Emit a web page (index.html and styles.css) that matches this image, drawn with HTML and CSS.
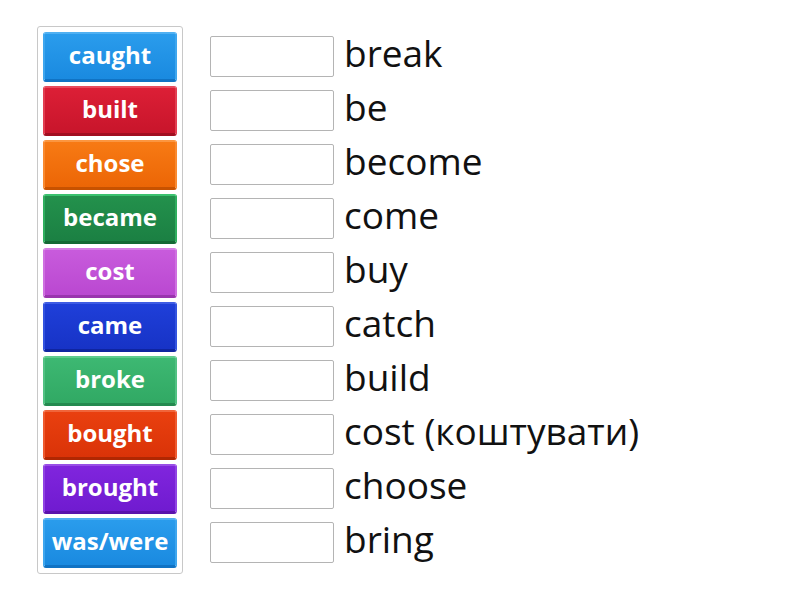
FILE: index.html
```html
<!DOCTYPE html>
<html>
<head>
<meta charset="utf-8">
<link rel="stylesheet" href="styles.css">
</head>
<body>
<div class="page">
  <div class="bank">
    <div class="tile t-blue">caught</div>
    <div class="tile t-red">built</div>
    <div class="tile t-orange">chose</div>
    <div class="tile t-green">became</div>
    <div class="tile t-magenta">cost</div>
    <div class="tile t-navy">came</div>
    <div class="tile t-mint">broke</div>
    <div class="tile t-vermil">bought</div>
    <div class="tile t-purple">brought</div>
    <div class="tile t-blue">was/were</div>
  </div>
  <div class="rows">
    <div class="row"><div class="slot"></div><span class="word">break</span></div>
    <div class="row"><div class="slot"></div><span class="word">be</span></div>
    <div class="row"><div class="slot"></div><span class="word">become</span></div>
    <div class="row"><div class="slot"></div><span class="word">come</span></div>
    <div class="row"><div class="slot"></div><span class="word">buy</span></div>
    <div class="row"><div class="slot"></div><span class="word">catch</span></div>
    <div class="row"><div class="slot"></div><span class="word">build</span></div>
    <div class="row"><div class="slot"></div><span class="word">cost (коштувати)</span></div>
    <div class="row"><div class="slot"></div><span class="word">choose</span></div>
    <div class="row"><div class="slot"></div><span class="word">bring</span></div>
  </div>
</div>
</body>
</html>
```

FILE: styles.css
```css
html, body {
  margin: 0;
  padding: 0;
  background: #fff;
}
body {
  font-family: "Open Sans", "Liberation Sans", sans-serif;
}
.page {
  display: flex;
  align-items: flex-start;
  padding: 26px 0 0 37px;
  gap: 27px;
}
.bank {
  display: flex;
  flex-direction: column;
  gap: 4px;
  padding: 5px;
  border: 1px solid #c8c8c8;
  border-radius: 3px;
  width: 134px;
}
.tile {
  height: 45px;
  border-radius: 3px;
  border-style: solid;
  border-width: 2px 2px 3px 2px;
  color: #fff;
  font-weight: 700;
  font-size: 24px;
  line-height: 41px;
  text-align: center;
  white-space: nowrap;
}
.t-blue { background: linear-gradient(#2a9cec, #1a8ae0); border-color: #4fb0f2 #3ea6ee #1073c4 #3ea6ee; }
.t-red { background: linear-gradient(#dc1f36, #c8152b); border-color: #e84a5c #e23e51 #a20e20 #e23e51; }
.t-orange { background: linear-gradient(#f77a14, #ec6606); border-color: #fb9640 #f98a30 #c85200 #f98a30; }
.t-green { background: linear-gradient(#23914c, #1b8043); border-color: #3bc26e #2fae5e #146834 #2fae5e; }
.t-magenta { background: linear-gradient(#c85bdc, #ba48d1); border-color: #d57de5 #cf70e0 #9a34ae #cf70e0; }
.t-navy { background: linear-gradient(#1f3fd9, #1733c6); border-color: #3e5ce4 #3353df #0f25a0 #3353df; }
.t-mint { background: linear-gradient(#3db872, #31a964); border-color: #5fcb8d #52c283 #248a4f #52c283; }
.t-vermil { background: linear-gradient(#e9400f, #da3308); border-color: #f0653a #ee5a2e #b02702 #ee5a2e; }
.t-purple { background: linear-gradient(#8025dd, #701bd0); border-color: #9a4ee6 #9043e3 #5a12ad #9043e3; }
.rows {
  display: flex;
  flex-direction: column;
  gap: 13px;
  padding-top: 10px;
}
.row {
  display: flex;
  align-items: center;
  height: 41px;
  gap: 10px;
}
.slot {
  width: 122px;
  height: 39px;
  border: 1px solid #b4b4b4;
  border-radius: 2px;
  flex: none;
}
.word {
  font-size: 37px;
  color: #111;
  line-height: 41px;
  white-space: nowrap;
  margin-top: -8px;
}
```
